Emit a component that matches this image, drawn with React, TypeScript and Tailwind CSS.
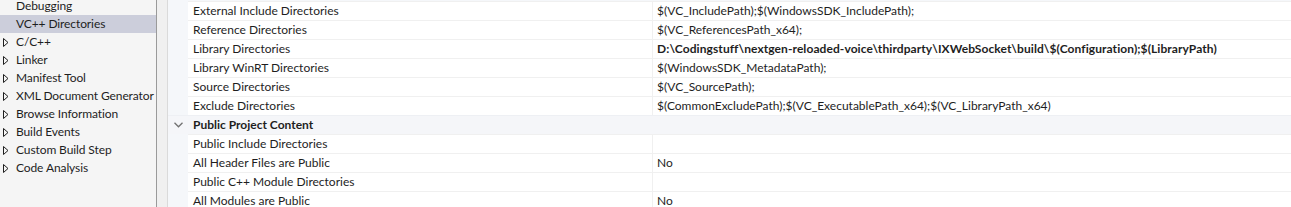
import React from "react"

const treeItems: { label: string; arrow: boolean; selected?: boolean }[] = [
  { label: "Debugging", arrow: false },
  { label: "VC++ Directories", arrow: false, selected: true },
  { label: "C/C++", arrow: true },
  { label: "Linker", arrow: true },
  { label: "Manifest Tool", arrow: true },
  { label: "XML Document Generator", arrow: true },
  { label: "Browse Information", arrow: true },
  { label: "Build Events", arrow: true },
  { label: "Custom Build Step", arrow: true },
  { label: "Code Analysis", arrow: true },
]

type Row = { name: string; value?: string; bold?: boolean; category?: boolean }

const rows: Row[] = [
  { name: "External Include Directories", value: "$(VC_IncludePath);$(WindowsSDK_IncludePath);" },
  { name: "Reference Directories", value: "$(VC_ReferencesPath_x64);" },
  {
    name: "Library Directories",
    value: "D:\\Codingstuff\\nextgen-reloaded-voice\\thirdparty\\IXWebSocket\\build\\$(Configuration);$(LibraryPath)",
    bold: true,
  },
  { name: "Library WinRT Directories", value: "$(WindowsSDK_MetadataPath);" },
  { name: "Source Directories", value: "$(VC_SourcePath);" },
  { name: "Exclude Directories", value: "$(CommonExcludePath);$(VC_ExecutablePath_x64);$(VC_LibraryPath_x64)" },
  { name: "Public Project Content", category: true },
  { name: "Public Include Directories", value: "" },
  { name: "All Header Files are Public", value: "No" },
  { name: "Public C++ Module Directories", value: "" },
  { name: "All Modules are Public", value: "No" },
]

const Arrow = () => (
  <svg width="6" height="9" viewBox="0 0 6 9" className="shrink-0">
    <path d="M0.5 0.5 L5 4.5 L0.5 8.5 Z" fill="none" stroke="#1e1e1e" strokeWidth="1" />
  </svg>
)

const Chevron = () => (
  <svg width="9" height="6" viewBox="0 0 9 6">
    <path d="M0.5 0.8 L4.5 4.8 L8.5 0.8" fill="none" stroke="#717171" strokeWidth="1.3" />
  </svg>
)

export default function App() {
  return (
    <div
      className="flex w-[1291px] h-[207px] overflow-hidden bg-white text-[12px] text-[#1e1e1e]"
      style={{ fontFamily: "Lato, 'Liberation Sans', sans-serif" }}
    >
      <div className="w-[156px] shrink-0 bg-[#f5f5f5] overflow-hidden">
        <div className="-mt-[3px]">
          {treeItems.map((t) => (
            <div
              key={t.label}
              className={`h-[18px] flex items-center whitespace-nowrap tracking-[-0.1px] ${t.selected ? "bg-[#cccedb]" : ""}`}
            >
              <div className="w-[16px] shrink-0 flex items-center pl-[3px]">{t.arrow && <Arrow />}</div>
              <span>{t.label}</span>
            </div>
          ))}
        </div>
      </div>
      <div className="w-px shrink-0 bg-[#9a9a9a]" />
      <div className="w-[10px] shrink-0 bg-[#f0f0f0]" />
      <div className="w-px shrink-0 bg-[#dadada]" />
      <div className="flex-1 bg-[#f5f7fa] pt-px">
        {rows.map((r) =>
          r.category ? (
            <div key={r.name} className="flex h-[19px] border-t border-[#eef0f4] bg-[#f5f6f9]">
              <div className="w-[20px] shrink-0 flex items-center justify-center">
                <Chevron />
              </div>
              <div className="flex items-center pl-[5px] font-bold whitespace-nowrap">{r.name}</div>
            </div>
          ) : (
            <div key={r.name} className="flex h-[19px]">
              <div className="w-[20px] shrink-0" />
              <div className="w-[465px] shrink-0 flex items-center pl-[5px] bg-white border-t border-r border-[#f0f0f0] whitespace-nowrap">
                {r.name}
              </div>
              <div
                className={`flex-1 flex items-center pl-[4px] bg-white border-t border-[#f0f0f0] whitespace-nowrap ${r.bold ? "font-bold tracking-[0.08px]" : ""}`}
              >
                {r.value}
              </div>
            </div>
          )
        )}
      </div>
    </div>
  )
}
